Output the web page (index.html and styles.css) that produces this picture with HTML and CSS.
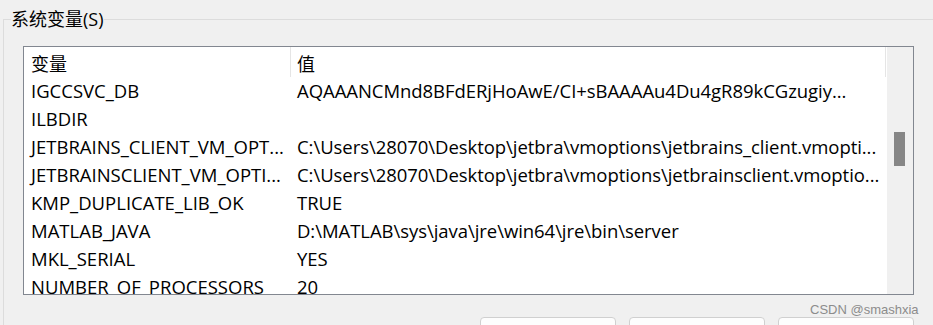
FILE: index.html
```html
<!DOCTYPE html>
<html lang="zh-CN">
<head>
<meta charset="utf-8">
<title>系统变量</title>
<link rel="stylesheet" href="styles.css">
</head>
<body>
<div class="page">
  <fieldset class="group">
    <legend class="group-title">系统变量(S)</legend>
    <div class="listview">
      <div class="list-main">
        <div class="list-header">
          <div class="hcol hcol-name">变量</div>
          <div class="hcol hcol-value">值</div>
        </div>
        <div class="list-body">
          <div class="row"><div class="cell cell-name">IGCCSVC_DB</div><div class="cell cell-value">AQAAANCMnd8BFdERjHoAwE/CI+sBAAAAu4Du4gR89kCGzugiy...</div></div>
          <div class="row"><div class="cell cell-name">ILBDIR</div><div class="cell cell-value"></div></div>
          <div class="row"><div class="cell cell-name">JETBRAINS_CLIENT_VM_OPT...</div><div class="cell cell-value">C:\Users\28070\Desktop\jetbra\vmoptions\jetbrains_client.vmopti...</div></div>
          <div class="row"><div class="cell cell-name">JETBRAINSCLIENT_VM_OPTI...</div><div class="cell cell-value">C:\Users\28070\Desktop\jetbra\vmoptions\jetbrainsclient.vmoptio...</div></div>
          <div class="row"><div class="cell cell-name">KMP_DUPLICATE_LIB_OK</div><div class="cell cell-value">TRUE</div></div>
          <div class="row"><div class="cell cell-name">MATLAB_JAVA</div><div class="cell cell-value">D:\MATLAB\sys\java\jre\win64\jre\bin\server</div></div>
          <div class="row"><div class="cell cell-name">MKL_SERIAL</div><div class="cell cell-value">YES</div></div>
          <div class="row"><div class="cell cell-name">NUMBER_OF_PROCESSORS</div><div class="cell cell-value">20</div></div>
        </div>
      </div>
      <div class="scrollbar"><div class="thumb"></div></div>
    </div>
    <div class="buttons">
      <button class="btn" type="button"></button>
      <button class="btn" type="button"></button>
      <button class="btn" type="button"></button>
    </div>
  </fieldset>
  <div class="watermark">CSDN @smashxia</div>
</div>
</body>
</html>
```

FILE: styles.css
```css
html, body {
  margin: 0;
  padding: 0;
  background: #f0f0f0;
}

body {
  width: 933px;
  height: 325px;
  overflow: hidden;
  font-family: "Open Sans", "Noto Sans CJK SC", sans-serif;
  color: #000;
}

.page {
  position: relative;
  width: 933px;
  height: 325px;
  overflow: hidden;
}

.group {
  margin: 7px 0 0 3px;
  padding: 0;
  width: 980px;
  min-inline-size: 0;
  border: 1px solid #dcdcdc;
  border-right: none;
  border-bottom: none;
}

.group-title {
  margin-left: 7px;
  padding: 0;
  font-size: 18px;
  line-height: 24px;
  height: 24px;
  white-space: nowrap;
}

.listview {
  margin: 15px 0 0 19px;
  width: 891px;
  height: 249px;
  box-sizing: border-box;
  border: 1px solid #828790;
  background: #fff;
  display: flex;
  overflow: hidden;
}

.list-main {
  width: 863px;
  flex: none;
  display: flex;
  flex-direction: column;
}

.list-header {
  display: flex;
  height: 30px;
  flex: none;
}

.hcol {
  box-sizing: border-box;
  height: 30px;
  padding-top: 6px;
  font-size: 18px;
  line-height: 22px;
  border-right: 1px solid #e5e5e5;
  white-space: nowrap;
}

.hcol-name {
  width: 267px;
  padding-left: 7px;
}

.hcol-value {
  width: 595px;
  padding-left: 6px;
}

.list-body {
  display: flex;
  flex-direction: column;
}

.row {
  display: flex;
  height: 28px;
  flex: none;
}

.cell {
  box-sizing: border-box;
  font-size: 18.5px;
  line-height: 28px;
  height: 28px;
  white-space: nowrap;
  overflow: hidden;
  text-overflow: ellipsis;
}

.cell-name {
  width: 267px;
  padding: 0 4px 0 7px;
}

.cell-value {
  width: 595px;
  padding: 0 0 0 6px;
  letter-spacing: -0.05px;
}

.scrollbar {
  width: 26px;
  flex: none;
  background: #f0f0f0;
  padding: 85px 0 0 7px;
  box-sizing: border-box;
}

.thumb {
  width: 11px;
  height: 34px;
  background: #868686;
}

.buttons {
  margin: 22px 0 0 19px;
  width: 891px;
  display: flex;
  justify-content: flex-end;
  gap: 13px;
}

.btn {
  width: 136px;
  height: 32px;
  padding: 0;
  background: #fdfdfd;
  border: 1px solid #d0d0d0;
  border-radius: 4px;
}

.watermark {
  position: absolute;
  left: 810px;
  top: 302px;
  font-family: "Liberation Sans", Arial, sans-serif;
  font-size: 13px;
  line-height: 16px;
  color: #8c8c8c;
  white-space: nowrap;
}
```
